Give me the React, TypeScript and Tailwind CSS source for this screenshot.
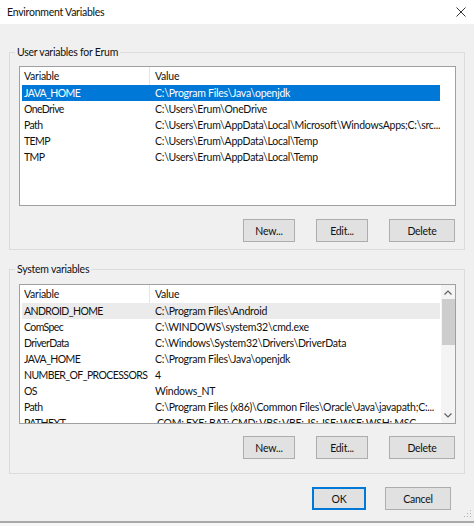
import React from 'react';

const userVars = [
  { name: 'JAVA_HOME', value: 'C:\\Program Files\\Java\\openjdk' },
  { name: 'OneDrive', value: 'C:\\Users\\Erum\\OneDrive' },
  { name: 'Path', value: 'C:\\Users\\Erum\\AppData\\Local\\Microsoft\\WindowsApps;C:\\src...' },
  { name: 'TEMP', value: 'C:\\Users\\Erum\\AppData\\Local\\Temp' },
  { name: 'TMP', value: 'C:\\Users\\Erum\\AppData\\Local\\Temp' },
];

const systemVars = [
  { name: 'ANDROID_HOME', value: 'C:\\Program Files\\Android' },
  { name: 'ComSpec', value: 'C:\\WINDOWS\\system32\\cmd.exe' },
  { name: 'DriverData', value: 'C:\\Windows\\System32\\Drivers\\DriverData' },
  { name: 'JAVA_HOME', value: 'C:\\Program Files\\Java\\openjdk' },
  { name: 'NUMBER_OF_PROCESSORS', value: '4' },
  { name: 'OS', value: 'Windows_NT' },
  { name: 'Path', value: 'C:\\Program Files (x86)\\Common Files\\Oracle\\Java\\javapath;C:...' },
  { name: 'PATHEXT', value: '.COM;.EXE;.BAT;.CMD;.VBS;.VBE;.JS;.JSE;.WSF;.WSH;.MSC' },
];

type Row = { name: string; value: string };

function VarList({ rows, selected, focused, scroll }: { rows: Row[]; selected: number; focused: boolean; scroll?: boolean }) {
  return (
    <div className="flex h-[140px] overflow-hidden border border-[#a0a0a0] bg-white">
      <div className="flex-1 overflow-hidden">
        {/* header */}
        <div className="flex h-[18px] items-center whitespace-nowrap">
          <div className="w-[130px] shrink-0 h-full pl-[4px] flex items-center border-r border-[#e5e5e5]">Variable</div>
          <div className="pl-[5px]">Value</div>
        </div>
        {rows.map((r, i) => {
          const sel = i === selected;
          const cls = sel ? (focused ? 'bg-[#0078d7] text-white' : 'bg-[#ebebeb]') : '';
          return (
            <div key={i} className={`ml-[2px] w-[418px] h-[16px] flex items-center whitespace-nowrap overflow-hidden ${cls}`}>
              <div className="w-[128px] shrink-0 pl-[2px] tracking-[-0.6px]">{r.name}</div>
              <div className="pl-[5px] shrink-0">{r.value}</div>
            </div>
          );
        })}
      </div>
      {scroll && (
        <div className="w-[14px] shrink-0 bg-[#f4f4f4] flex flex-col items-center">
          <div className="h-[14px] flex items-center justify-center">
            <svg width="8" height="5" viewBox="0 0 8 5"><path d="M0.5 4.5 L4 1 L7.5 4.5" fill="none" stroke="#606060" strokeWidth="1.2" /></svg>
          </div>
          <div className="w-[13px] h-[46px] bg-[#cdcdcd]" />
          <div className="flex-1" />
          <div className="h-[16px] flex items-center justify-center">
            <svg width="8" height="5" viewBox="0 0 8 5"><path d="M0.5 0.5 L4 4 L7.5 0.5" fill="none" stroke="#606060" strokeWidth="1.2" /></svg>
          </div>
        </div>
      )}
    </div>
  );
}

function Btn({ label, w, primary }: { label: string; w: string; primary?: boolean }) {
  return (
    <div className={`${w} h-[23px] flex items-center justify-center bg-[#e1e1e1] border ${primary ? 'border-[#0078d7] border-[2px]' : 'border-[#adadad]'}`}>
      {label}
    </div>
  );
}

function Buttons() {
  return (
    <div className="flex justify-end gap-[21px] pr-[9px]">
      <Btn label="New..." w="w-[52px]" />
      <Btn label="Edit..." w="w-[52px]" />
      <Btn label="Delete" w="w-[66px]" />
    </div>
  );
}

export default function App() {
  return (
    <div className="w-[474px] h-[526px] bg-[#f0f0f0] text-[#111] text-[10.5px] tracking-[-0.25px] leading-[16px] font-['Segoe_UI','Lato',sans-serif] flex flex-col overflow-hidden">
      {/* title bar */}
      <div className="h-[24px] bg-white flex items-center justify-between pl-[7px] pr-[8px] shrink-0">
        <span>Environment Variables</span>
        <svg width="10" height="10" viewBox="0 0 10 10"><path d="M0.5 0.5 L9.5 9.5 M9.5 0.5 L0.5 9.5" stroke="#333" strokeWidth="1" /></svg>
      </div>

      <div className="px-[9px] pt-[28px]">
        {/* user variables */}
        <div className="border border-[#dcdcdc] pb-[7px]">
          <div className="-mt-[9px] ml-[5px] w-fit px-[2px] h-[16px] flex items-center bg-[#f0f0f0]">User variables for Erum</div>
          <div className="mt-[6px] ml-[9px] mr-[8px]">
            <VarList rows={userVars} selected={0} focused />
          </div>
          <div className="mt-[13px]">
            <Buttons />
          </div>
        </div>

        {/* system variables */}
        <div className="mt-[19px] border border-[#dcdcdc] pb-[14px]">
          <div className="-mt-[9px] ml-[5px] w-fit px-[2px] h-[16px] flex items-center bg-[#f0f0f0]">System variables</div>
          <div className="mt-[7px] ml-[9px] mr-[8px]">
            <VarList rows={systemVars} selected={0} focused={false} scroll />
          </div>
          <div className="mt-[12px]">
            <Buttons />
          </div>
        </div>

        <div className="mt-[13px] flex justify-end gap-[19px] pr-[14px]">
          <Btn label="OK" w="w-[54px]" primary />
          <Btn label="Cancel" w="w-[66px]" />
        </div>
      </div>

      <div className="flex-1 flex items-end justify-end pr-[2px] pb-[3px]">
        <svg width="8" height="8" viewBox="0 0 8 8" fill="#b0b0b0">
          <rect x="6" y="0" width="1" height="1" />
          <rect x="3" y="3" width="1" height="1" />
          <rect x="6" y="3" width="1" height="1" />
          <rect x="0" y="6" width="1" height="1" />
          <rect x="3" y="6" width="1" height="1" />
          <rect x="6" y="6" width="1" height="1" />
        </svg>
      </div>
      <div className="h-[2px] bg-[#a8a8a8] shrink-0" />
      <div className="h-[5px] bg-[#f8f8f8] shrink-0" />
    </div>
  );
}
